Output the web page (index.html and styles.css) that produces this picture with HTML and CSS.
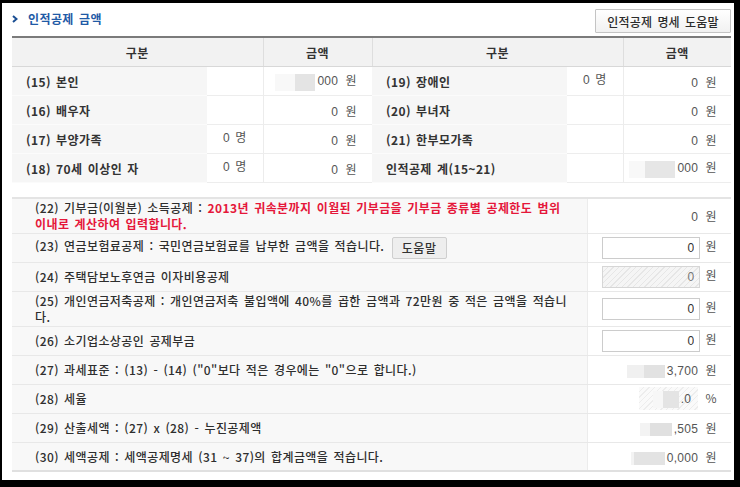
FILE: index.html
```html
<!DOCTYPE html>
<html lang="ko">
<head>
<meta charset="utf-8">
<title>인적공제 금액</title>
<link rel="stylesheet" href="styles.css">
</head>
<body>
<div class="frame">
  <div class="head">
    <h2 class="title"><svg class="chev" width="6" height="8" viewBox="0 0 6 8"><path d="M1 1 L4.5 4 L1 7" fill="none" stroke="#1b4f93" stroke-width="2"/></svg>인적공제 금액</h2>
    <button class="help-btn">인적공제 명세 도움말</button>
  </div>

  <table class="t1">
    <colgroup>
      <col class="c-lbl"><col class="c-cnt"><col class="c-amt"><col class="c-lbl"><col class="c-cnt"><col class="c-amt2">
    </colgroup>
    <thead>
      <tr><th colspan="2">구분</th><th>금액</th><th colspan="2">구분</th><th class="last">금액</th></tr>
    </thead>
    <tbody>
      <tr>
        <td class="lbl">(15) 본인</td><td class="cnt"></td>
        <td class="amt"><span class="rd rd-15"></span><span class="num">000</span> <span class="won">원</span></td>
        <td class="lbl">(19) 장애인</td><td class="cnt"><span class="num">0</span> 명</td>
        <td class="amt last"><span class="num">0</span> <span class="won">원</span></td>
      </tr>
      <tr>
        <td class="lbl">(16) 배우자</td><td class="cnt"></td>
        <td class="amt"><span class="num">0</span> <span class="won">원</span></td>
        <td class="lbl">(20) 부녀자</td><td class="cnt"></td>
        <td class="amt last"><span class="num">0</span> <span class="won">원</span></td>
      </tr>
      <tr>
        <td class="lbl">(17) 부양가족</td><td class="cnt"><span class="num">0</span> 명</td>
        <td class="amt"><span class="num">0</span> <span class="won">원</span></td>
        <td class="lbl">(21) 한부모가족</td><td class="cnt"></td>
        <td class="amt last"><span class="num">0</span> <span class="won">원</span></td>
      </tr>
      <tr>
        <td class="lbl">(18) 70세 이상인 자</td><td class="cnt"><span class="num">0</span> 명</td>
        <td class="amt"><span class="num">0</span> <span class="won">원</span></td>
        <td class="lbl">인적공제 계(15~21)</td><td class="cnt"></td>
        <td class="amt last"><span class="rd rd-sum"></span><span class="num">000</span> <span class="won">원</span></td>
      </tr>
    </tbody>
  </table>

  <table class="t2">
    <colgroup><col class="c-desc"><col class="c-val"></colgroup>
    <tbody>
      <tr class="tall">
        <td class="desc"><span class="line">(22) 기부금(이월분) 소득공제 : <span class="red">2013년 귀속분까지 이월된 기부금을 기부금 종류별 공제한도 범위</span></span><span class="line red">이내로 계산하여 입력합니다.</span></td>
        <td class="val"><span class="num">0</span> <span class="won">원</span></td>
      </tr>
      <tr>
        <td class="desc">(23) 연금보험료공제 : 국민연금보험료를 납부한 금액을 적습니다. <button class="small-btn">도움말</button></td>
        <td class="val"><input class="field" type="text" value="0"> <span class="won">원</span></td>
      </tr>
      <tr>
        <td class="desc">(24) 주택담보노후연금 이자비용공제</td>
        <td class="val"><input class="field disabled" type="text" value="0" disabled> <span class="won">원</span></td>
      </tr>
      <tr class="tall">
        <td class="desc"><span class="line">(25) 개인연금저축공제 : 개인연금저축 불입액에 40%를 곱한 금액과 72만원 중 적은 금액을 적습니</span><span class="line">다.</span></td>
        <td class="val"><input class="field" type="text" value="0"> <span class="won">원</span></td>
      </tr>
      <tr>
        <td class="desc">(26) 소기업소상공인 공제부금</td>
        <td class="val"><input class="field" type="text" value="0"> <span class="won">원</span></td>
      </tr>
      <tr>
        <td class="desc">(27) 과세표준 : (13) - (14) ("0"보다 적은 경우에는 "0"으로 합니다.)</td>
        <td class="val"><span class="rd rd-27"></span><span class="num">3,700</span> <span class="won">원</span></td>
      </tr>
      <tr>
        <td class="desc">(28) 세율</td>
        <td class="val"><span class="rate"><span class="rd rd-28"></span><span class="num">.0</span></span> <span class="pct">%</span></td>
      </tr>
      <tr>
        <td class="desc">(29) 산출세액 : (27) x (28) - 누진공제액</td>
        <td class="val"><span class="rd rd-29"></span><span class="num">,505</span> <span class="won">원</span></td>
      </tr>
      <tr>
        <td class="desc">(30) 세액공제 : 세액공제명세 (31 ~ 37)의 합계금액을 적습니다.</td>
        <td class="val"><span class="rd rd-30"></span><span class="num">0,000</span> <span class="won">원</span></td>
      </tr>
    </tbody>
  </table>
</div>
</body>
</html>
```

FILE: styles.css
```css
html, body {
  margin: 0;
  padding: 0;
  background: #000;
}

body {
  font-family: "Noto Sans CJK KR", "Noto Sans", sans-serif;
  font-size: 12px;
  color: #333;
  letter-spacing: 0.4px;
  word-spacing: 1.5px;
}

.frame {
  margin: 3px 0 0 2px;
  width: 732px;
  height: 477px;
  box-sizing: border-box;
  padding: 0 3px 0 10px;
  background: #fff;
}

.head {
  height: 33px;
  display: flex;
  justify-content: space-between;
  align-items: flex-start;
}

.title {
  margin: 0;
  padding-top: 8px;
  font-size: 12px;
  line-height: 15px;
  font-weight: bold;
  color: #1f5aa6;
  display: flex;
  align-items: center;
}

.chev {
  margin: 0 10px 0 0;
}

.help-btn {
  margin-top: 6px;
  width: 136px;
  height: 24px;
  padding: 0;
  border: 1px solid #c4c4c4;
  border-radius: 1px;
  background: linear-gradient(#ffffff, #f1f1f1);
  font-family: inherit;
  font-size: 12px;
  font-weight: 500;
  color: #2b2b2b;
  letter-spacing: 0.2px;
  word-spacing: 1.5px;
}

/* ---------- table 1 ---------- */
.t1 {
  width: 719px;
  border-collapse: collapse;
  table-layout: fixed;
  border-top: 2px solid #7b7b7b;
}

.c-lbl { width: 195px; }
.c-cnt { width: 56px; }
.c-amt { width: 109px; }
.c-amt2 { width: 108px; }

.t1 th {
  height: 28px;
  padding: 0;
  background: #f2f2f2;
  font-weight: bold;
  text-align: center;
  border-right: 1px solid #dedede;
  border-bottom: 1px solid #d8d8d8;
}

.t1 th.last {
  border-right: none;
}

.t1 td {
  height: 29px;
  padding: 0;
  box-sizing: border-box;
  border-bottom: 1px solid #ededed;
  white-space: nowrap;
}

.t1 td.lbl {
  background: #f6f6f6;
  border-bottom-color: #fbfbfb;
  padding-left: 14px;
  font-weight: bold;
  color: #333;
}

.t1 td.cnt {
  text-align: center;
  color: #555;
  padding-bottom: 5px;
}

.t1 td.amt {
  text-align: right;
  padding-right: 15px;
  border-left: 1px solid #ececec;
}

.t1 td.amt.last {
  padding-right: 14px;
}

.num {
  font-family: "Liberation Sans", sans-serif;
  color: #555;
  letter-spacing: 0.3px;
}

.won, .pct {
  color: #555;
  margin-left: 2px;
}

.rd {
  display: inline-block;
  height: 17px;
  vertical-align: middle;
  margin-right: 2px;
}

.rd-15 {
  width: 40px;
  background: linear-gradient(to right, #f8f8f8 0 50%, #e4e4e4 50% 100%);
}

.rd-sum {
  width: 46px;
  background: linear-gradient(to right, #f8f8f8 0 35%, #e6e6e6 35% 100%);
}

.rd-27 {
  width: 38px;
  height: 13px;
  background: linear-gradient(to right, #f0f0f0 0 45%, #e2e2e2 45% 100%);
}

.rd-28 {
  width: 26px;
  background: linear-gradient(to right, #f7f7f7 0 40%, #e4e4e4 40% 100%);
}

.rd-29 {
  width: 32px;
  height: 13px;
  background: linear-gradient(to right, #f3f3f3 0 30%, #e0e0e0 30% 100%);
}

.rd-30 {
  width: 34px;
  height: 13px;
  background: linear-gradient(to right, #f3f3f3 0 10%, #e3e3e3 10% 100%);
}

/* ---------- table 2 ---------- */
.t2 {
  width: 719px;
  margin-top: 14px;
  border-collapse: collapse;
  table-layout: fixed;
  border-top: 2px solid #e4e4e4;
  border-bottom: 2px solid #e0e0e0;
}

.c-desc { width: 575px; }
.c-val { width: 144px; }

.t2 td {
  height: 29px;
  padding: 0;
  box-sizing: border-box;
  border-bottom: 1px solid #e8e8e8;
}

.t2 tr.tall td {
  height: 35px;
}

.t2 td.desc {
  background: #f8f8f8;
  padding-left: 23px;
  color: #2e2e2e;
  font-weight: 500;
}

.line {
  display: block;
  height: 16px;
  line-height: 16px;
  white-space: nowrap;
}

.red {
  color: #e5173a;
  font-weight: bold;
}

.t2 td.val {
  text-align: right;
  padding-right: 14px;
  border-left: 1px solid #ececec;
  white-space: nowrap;
}

.small-btn {
  width: 55px;
  height: 22px;
  margin-left: 2px;
  padding: 0;
  vertical-align: middle;
  border: 1px solid #cfcfcf;
  border-radius: 2px;
  background: #eeeeee;
  font-family: inherit;
  font-size: 12px;
  font-weight: 500;
  color: #333;
  letter-spacing: 0.5px;
}

.field {
  width: 98px;
  height: 22px;
  box-sizing: border-box;
  margin: 0 -2px 0 0;
  padding: 0 5px 0 0;
  vertical-align: middle;
  border: 1px solid #cccccc;
  background: #fff;
  text-align: right;
  font-family: "Liberation Sans", sans-serif;
  font-size: 12px;
  color: #333;
}

.field.disabled {
  color: #777;
  border-color: #d6d6d6;
  background: repeating-linear-gradient(135deg, #f5f5f5 0 3px, #e6e6e6 3px 4px);
}

.rate {
  display: inline-block;
  padding: 2px 7px 2px 14px;
  background: repeating-linear-gradient(135deg, #fafafa 0 3px, #ededed 3px 4px);
}
```
